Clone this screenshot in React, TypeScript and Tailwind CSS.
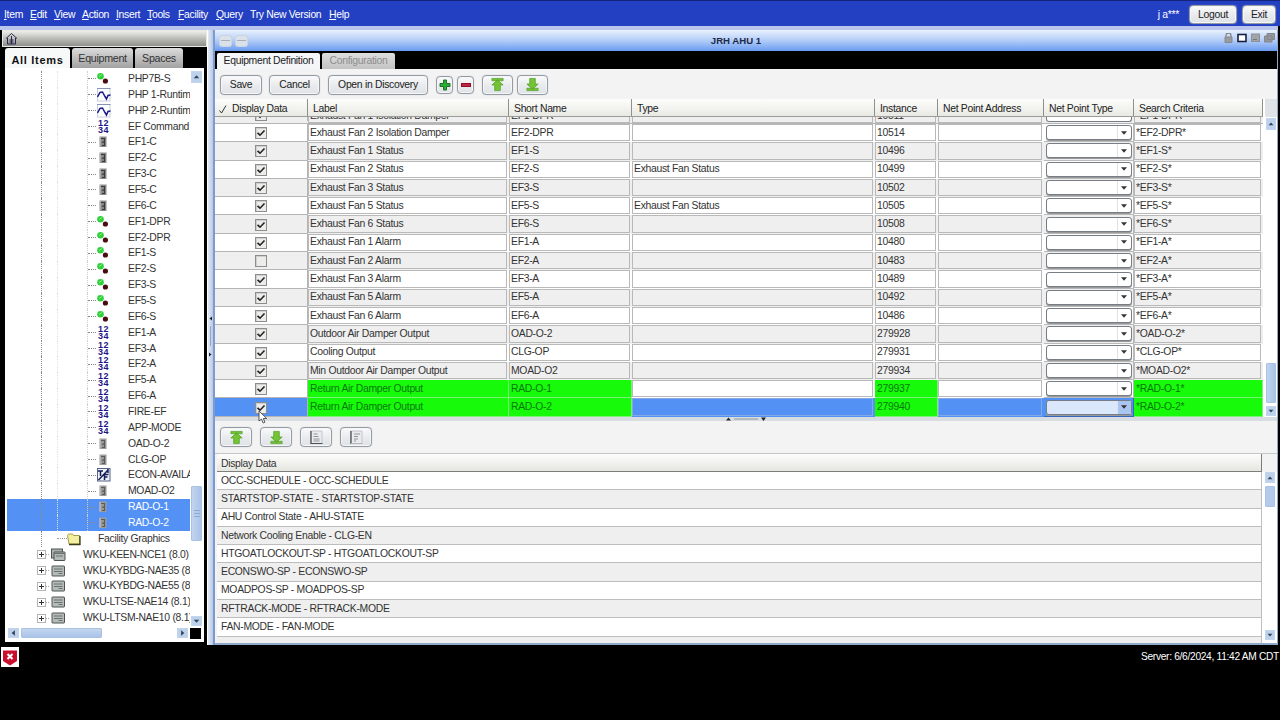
import type { ReactNode } from "react";

type IconKind = "bool" | "trend" | "number" | "analog" | "output" | "logic";

type TreeItem = { name: string; icon: IconKind; selected?: boolean };

type EquipmentRow = {
    label: string;
    short: string;
    type?: string;
    instance: string;
    unchecked?: boolean;
    added?: boolean;
    selected?: boolean;
};

const MENU = ["Item", "Edit", "View", "Action", "Insert", "Tools", "Facility", "Query", "Try New Version", "Help"];
const MENU_WIDTHS = [
    "w-[26px]", "w-[24px]", "w-[28px]", "w-[34px]", "w-[31px]",
    "w-[31px]", "w-[38px]", "w-[34px]", "w-[79px]", "w-[24px]",
];

const POINTS: TreeItem[] = [
    { name: "PHP7B-S", icon: "bool" },
    { name: "PHP 1-Runtim", icon: "trend" },
    { name: "PHP 2-Runtim", icon: "trend" },
    { name: "EF Command", icon: "number" },
    { name: "EF1-C", icon: "analog" },
    { name: "EF2-C", icon: "analog" },
    { name: "EF3-C", icon: "analog" },
    { name: "EF5-C", icon: "analog" },
    { name: "EF6-C", icon: "analog" },
    { name: "EF1-DPR", icon: "bool" },
    { name: "EF2-DPR", icon: "bool" },
    { name: "EF1-S", icon: "bool" },
    { name: "EF2-S", icon: "bool" },
    { name: "EF3-S", icon: "bool" },
    { name: "EF5-S", icon: "bool" },
    { name: "EF6-S", icon: "bool" },
    { name: "EF1-A", icon: "number" },
    { name: "EF3-A", icon: "number" },
    { name: "EF2-A", icon: "number" },
    { name: "EF5-A", icon: "number" },
    { name: "EF6-A", icon: "number" },
    { name: "FIRE-EF", icon: "number" },
    { name: "APP-MODE", icon: "number" },
    { name: "OAD-O-2", icon: "output" },
    { name: "CLG-OP", icon: "output" },
    { name: "ECON-AVAILA", icon: "logic" },
    { name: "MOAD-O2", icon: "output" },
    { name: "RAD-O-1", icon: "output", selected: true },
    { name: "RAD-O-2", icon: "output", selected: true },
];

const ENGINES = [
    "WKU-KEEN-NCE1 (8.0)",
    "WKU-KYBDG-NAE35 (8.",
    "WKU-KYBDG-NAE55 (8.",
    "WKU-LTSE-NAE14 (8.1)",
    "WKU-LTSM-NAE10 (8.1)",
];

const ROWS: EquipmentRow[] = [
    { label: "Exhaust Fan 2 Isolation Damper", short: "EF2-DPR", instance: "10514" },
    { label: "Exhaust Fan 1 Status", short: "EF1-S", instance: "10496" },
    { label: "Exhaust Fan 2 Status", short: "EF2-S", type: "Exhaust Fan Status", instance: "10499" },
    { label: "Exhaust Fan 3 Status", short: "EF3-S", instance: "10502" },
    { label: "Exhaust Fan 5 Status", short: "EF5-S", type: "Exhaust Fan Status", instance: "10505" },
    { label: "Exhaust Fan 6 Status", short: "EF6-S", instance: "10508" },
    { label: "Exhaust Fan 1 Alarm", short: "EF1-A", instance: "10480" },
    { label: "Exhaust Fan 2 Alarm", short: "EF2-A", instance: "10483", unchecked: true },
    { label: "Exhaust Fan 3 Alarm", short: "EF3-A", instance: "10489" },
    { label: "Exhaust Fan 5 Alarm", short: "EF5-A", instance: "10492" },
    { label: "Exhaust Fan 6 Alarm", short: "EF6-A", instance: "10486" },
    { label: "Outdoor Air Damper Output", short: "OAD-O-2", instance: "279928" },
    { label: "Cooling Output", short: "CLG-OP", instance: "279931" },
    { label: "Min Outdoor Air Damper Output", short: "MOAD-O2", instance: "279934" },
    { label: "Return Air Damper Output", short: "RAD-O-1", instance: "279937", added: true },
    { label: "Return Air Damper Output", short: "RAD-O-2", instance: "279940", added: true, selected: true },
];

const DISPLAY_DATA = [
    "OCC-SCHEDULE - OCC-SCHEDULE",
    "STARTSTOP-STATE - STARTSTOP-STATE",
    "AHU Control State - AHU-STATE",
    "Network Cooling Enable - CLG-EN",
    "HTGOATLOCKOUT-SP - HTGOATLOCKOUT-SP",
    "ECONSWO-SP - ECONSWO-SP",
    "MOADPOS-SP - MOADPOS-SP",
    "RFTRACK-MODE - RFTRACK-MODE",
    "FAN-MODE - FAN-MODE",
];

const GRID = "grid grid-cols-[93px_201px_123px_243px_63px_106px_90px_129px]";

function PointIcon({ kind }: { kind: IconKind }) {
    if (kind === "bool") {
        return (
            <svg width="14" height="14" viewBox="0 0 14 14">
                <circle cx="3.5" cy="4.2" r="3.3" fill="#2fd03a" />
                <path d="M2 4.5l3-2" stroke="#8df08f" strokeWidth="1" />
                <circle cx="8.4" cy="9" r="2.6" fill="#4a0c10" />
            </svg>
        );
    }
    if (kind === "trend") {
        return (
            <svg width="14" height="14" viewBox="0 0 14 14" fill="none">
                <rect x="0.5" y="0.5" width="12.5" height="12.5" fill="#fff" stroke="#c9cede" />
                <path d="M0 .5h13.5" stroke="#8a93b5" />
                <path d="M0.5 9L3 4.5L5.500 4L8 8.5L9.500 11L11 7.5L13.500 7" stroke="#1b1b8c" strokeWidth="1.5" />
            </svg>
        );
    }
    if (kind === "number") {
        return (
            <div className="w-[14px] pl-px text-[9px] leading-[7px] font-bold tracking-[0.6px] text-[#1c1685]">
                <div>12</div>
                <div>34</div>
            </div>
        );
    }
    if (kind === "logic") {
        return (
            <svg width="14" height="14" viewBox="0 0 14 14" fill="none">
                <rect x="0.5" y="0.5" width="12.5" height="12.5" fill="#f0f2f8" stroke="#56618a" />
                <path d="M1 3h5M3.5 3v5M1.5 12L11 2M7.5 12V6.5h4M7.5 9h3M11 1v4" stroke="#151f58" strokeWidth="1.5" />
            </svg>
        );
    }
    return (
        <svg width="14" height="14" viewBox="0 0 14 14" fill="none">
            <rect x="2.5" y="1.5" width="7" height="10.5" fill={kind === "analog" ? "#8b8b8b" : "#9b9b9b"} />
            <path d="M4 3.500h3.5v3L5 7.500M7.5 7v3.500H5" stroke={kind === "analog" ? "#3a3a3a" : "#5b5b5b"} strokeWidth="1.2" />
            <path d="M3 2v9.5" stroke="#c9c9c9" />
        </svg>
    );
}

function EngineIcon({ stacked }: { stacked: boolean }) {
    return (
        <svg width="15" height="14" viewBox="0 0 15 14" fill="none">
            {stacked && <rect x="0.5" y="1" width="11" height="9" fill="#a9b0ae" stroke="#4c5452" />}
            <rect x={stacked ? 3 : 1} y={stacked ? 4 : 2} width={stacked ? 11 : 12.5} height={stacked ? 8.5 : 10} rx="0.5" fill="#b4bab8" stroke="#4c5452" />
            <path d={stacked ? "M3 5.5h11M5 8h7" : "M3 5h8.5M3 7.5h8.5M7.5 9.5h4"} stroke="#6b7371" />
        </svg>
    );
}

// Vertical guide lines drawn at the left of every tree row
function Guides() {
    return (
        <div className="flex h-full shrink-0">
            <div className="w-[34px]" />
            <div className="w-4 border-l border-dotted border-[#8a8a8a]" />
            <div className="w-[30px] border-l border-dotted border-[#e2e2e2]" />
            <div className="flex w-[10px] items-center border-l border-dotted border-[#d0d0d0]">
                <div className="w-2 border-t border-dotted border-[#888]" />
            </div>
        </div>
    );
}

function ScrollButton({ dir, className = "" }: { dir: "up" | "down" | "left" | "right"; className?: string }) {
    const paths = { up: "M2 6.5L5 3l3 3.5z", down: "M2 3.5L5 7l3-3.5z", left: "M6.5 2L3 5l3.5 3z", right: "M3.5 2L7 5 3.5 8z" };
    return (
        <div className={`flex shrink-0 items-center justify-center border border-[#c3d5ec] bg-[#bdd1ea] ${className}`}>
            <svg width="10" height="10" viewBox="0 0 10 10">
                <path d={paths[dir]} fill="#33415c" />
            </svg>
        </div>
    );
}

function Check({ off = false }: { off?: boolean }) {
    return (
        <span className="flex h-3 w-3 shrink-0 items-center justify-center border border-[#8d8d8d] bg-[#ececea] shadow-[inset_1px_1px_0_#cfcfcf]">
            {!off && (
                <svg width="10" height="10" viewBox="0 0 10 10" fill="none">
                    <path d="M1.5 4.8L4 7.2L8.500 2.5" stroke="#222" strokeWidth="1.6" />
                </svg>
            )}
        </span>
    );
}

function ToolButton({ children, className = "" }: { children: ReactNode; className?: string }) {
    return (
        <button
            type="button"
            className={`flex shrink-0 items-center justify-center rounded-[4px] border border-[#949ba3] bg-linear-to-b from-[#fafbfc] via-[#e9ebee] to-[#dfe3e7] whitespace-nowrap text-[#222] shadow-[inset_0_0_0_1px_#f4f6f8,0_0_1px_#a9b0b8] ${className}`}
        >
            {children}
        </button>
    );
}

function MoveIcon({ down = false }: { down?: boolean }) {
    return (
        <svg width="15" height="15" viewBox="0 0 16 16" className={down ? "rotate-180" : ""}>
            <path d="M2 1.5h12v2.5H2zM8 3L14 8.500H11V14.500H5V8.500H2z" fill="#72c435" stroke="#57a02c" strokeWidth="0.8" />
        </svg>
    );
}

function ListIcon({ left = false }: { left?: boolean }) {
    return (
        <svg width="15" height="15" viewBox="0 0 15 15" fill="none">
            <path d="M1.5 1h11.5v12.5H1.5z" fill="#e9ebee" stroke="#c3c6cc" />
            <path d="M2 1v13" stroke="#4d5055" strokeWidth="1.3" />
            <path d="M2 13.500h11.5" stroke={left ? "#b4b7bc" : "#4d5055"} />
            <path d={left ? "M5 4h6M5 6.500h4M5 9h4M5 11h2" : "M4.500 4h4M4.500 6.500h5M4.500 9h6M4.500 11h6"} stroke="#8f9298" />
        </svg>
    );
}

function LeftPane() {
    return (
        <div className="flex h-[615px] w-[207px] shrink-0 flex-col bg-black pl-[2px]">
            <div className="flex h-[17px] shrink-0 items-center border border-[#e8e8e4] bg-linear-to-b from-[#eeeeea] via-[#bdbdb8] to-[#8f8f8b] pl-[2px]">
                <svg width="13" height="13" viewBox="0 0 13 13" fill="none" stroke="#26264e">
                    <path d="M1 6.500L6.500 1.500L12 6.500M2.500 6v6h8V6M4.500 8h4M4.500 10h4M6.500 4v8" />
                </svg>
            </div>
            <div className="flex h-[21px] shrink-0 items-end gap-[2px] pl-[3px]">
                <div className="flex h-5 w-[65px] items-center justify-center rounded-t-[3px] bg-[#f7f8f8] pt-[3px] text-[11px] font-bold tracking-[0.7px] whitespace-nowrap text-[#111]">All Items</div>
                <div className="flex h-5 w-[61px] items-center justify-center rounded-t-[3px] bg-linear-to-b from-[#dcdcdc] to-[#a2a2a2] text-[10.7px] text-[#333]">Equipment</div>
                <div className="flex h-5 w-[48px] items-center justify-center rounded-t-[3px] bg-linear-to-b from-[#dcdcdc] to-[#a2a2a2] text-[10.7px] text-[#333]">Spaces</div>
            </div>
            <div className="flex h-[576px] flex-col border-l-[3px] border-r-[3px] border-b-2 border-black bg-white">
                <div className="flex h-[559px] pl-[2px]">
                    <div className="w-[183px] shrink-0 overflow-hidden pt-[3px]">
                        {POINTS.map((p) => (
                            <div
                                key={p.name}
                                className={`flex h-[15.86px] items-center whitespace-nowrap ${p.selected ? "bg-[#5491f5] text-white" : ""}`}
                            >
                                <Guides />
                                <div className="flex w-[31px] shrink-0 items-center">
                                    <PointIcon kind={p.icon} />
                                </div>
                                <span>{p.name}</span>
                            </div>
                        ))}
                        <div className="flex h-[15.86px] items-center whitespace-nowrap">
                            <div className="h-full w-[34px]" />
                            <div className="h-full w-4 border-l border-dotted border-[#8a8a8a]" />
                            <div className="w-[10px] border-t border-dotted border-[#999]" />
                            <svg width="31" height="14" viewBox="0 0 31 14">
                                <path d="M0.500 3.500l1-1.500h4l1 1.500h6v8.500H2z" fill="#f3f0a2" stroke="#a3a04a" />
                                <path d="M13 4v8.500H2" fill="none" stroke="#3c3b1e" strokeWidth="1.3" />
                            </svg>
                            <span>Facility Graphics</span>
                        </div>
                        {ENGINES.map((name, i) => (
                            <div key={name} className="flex h-[15.86px] items-center whitespace-nowrap">
                                <div className="flex w-[44px] shrink-0 items-center pl-[30px]">
                                    <svg width="13" height="9" viewBox="0 0 13 9" fill="none">
                                        <rect x="0.5" y="0.5" width="8" height="8" fill="#fff" stroke="#b5b5b5" />
                                        <path d="M2 4.500h5M4.500 2v5" stroke="#333" />
                                        <path d="M9 4.500h4" stroke="#aaa" strokeDasharray="1 1" />
                                    </svg>
                                </div>
                                <div className="w-[32px] shrink-0">
                                    <EngineIcon stacked={i === 0} />
                                </div>
                                <span>{name}</span>
                            </div>
                        ))}
                    </div>
                    <div className="flex w-[13px] flex-col items-center bg-white pt-[3px]">
                        <ScrollButton dir="up" className="h-3 w-[11px]" />
                        <div className="mt-[403px] flex h-[55px] w-[11px] flex-col items-center justify-center gap-[2px] rounded-[1px] border border-[#a9c2e2] bg-linear-to-r from-[#c2d4ee] to-[#a9c3e8]">
                            <div className="h-px w-[6px] bg-[#8faad2]" />
                            <div className="h-px w-[6px] bg-[#8faad2]" />
                            <div className="h-px w-[6px] bg-[#8faad2]" />
                        </div>
                        <ScrollButton dir="down" className="mt-auto mb-px h-[10px] w-[11px]" />
                    </div>
                </div>
                <div className="flex h-3 items-center pl-[3px]">
                    <ScrollButton dir="left" className="h-[10px] w-[11px]" />
                    <div className="ml-[2px] h-[10px] w-[81px] rounded-[1px] border border-[#a9c2e2] bg-linear-to-b from-[#c4d6f0] to-[#a9c3e8]" />
                    <ScrollButton dir="right" className="ml-[75px] h-[10px] w-[11px]" />
                    <div className="ml-[2px] h-[11px] w-[11px] bg-black" />
                </div>
            </div>
        </div>
    );
}

function EquipmentTable() {
    const headers = ["Label", "Short Name", "Type", "Instance", "Net Point Address", "Net Point Type", "Search Criteria"];
    const sliver = "mr-[2px] flex h-[6px] items-end overflow-hidden border-x border-b border-[#b9b9b9] pb-px pl-px leading-[11px] whitespace-nowrap";
    return (
        <div className="flex h-[318px] shrink-0">
            <div className="w-[1048px] shrink-0 overflow-hidden">
                <div className={`${GRID} h-[18px] border-b border-[#9c9c98] bg-linear-to-b from-[#fdfdfb] to-[#e9e9e4] text-[#222]`}>
                    <div className="flex items-center gap-[5px] border-r border-[#8f8f8c] pt-[3px] pl-1 whitespace-nowrap">
                        <svg width="8" height="9" viewBox="0 0 8 9" fill="none">
                            <path d="M0.5 5.500L2.500 8L7 0.500" stroke="#333" />
                        </svg>
                        Display Data
                    </div>
                    {headers.map((h) => (
                        <div key={h} className="flex items-center border-r border-[#8f8f8c] pt-[3px] pl-[5px] whitespace-nowrap">
                            {h}
                        </div>
                    ))}
                </div>
                {/* Bottom edge of the row scrolled under the header */}
                <div className={`${GRID} h-[7px] border-b border-[#b5b5b5] bg-[#efefef]`}>
                    <div className="flex h-[4px] items-end justify-center overflow-hidden border-r border-[#b5b5b5]"><Check /></div>
                    <div className={sliver}>Exhaust Fan 1 Isolation Damper</div>
                    <div className={sliver}>EF1-DPR</div>
                    <div className={sliver} />
                    <div className={sliver}>10511</div>
                    <div className={sliver} />
                    <div className="mx-[2px] h-[5px] rounded-b-[3px] border border-t-0 border-[#777d86] bg-white" />
                    <div className={sliver}>*EF1-DPR*</div>
                </div>
                {ROWS.map((r, i) => {
                    const bg = r.selected ? "bg-[#5491f5]" : i % 2 ? "bg-[#efefef]" : "bg-white";
                    const plain = `mr-[2px] mb-px flex items-center border pl-px whitespace-nowrap ${r.selected ? "border-[#86a9e6]" : "border-[#b9b9b9]"}`;
                    const cell = r.added
                        ? "flex items-center border-r border-b border-[#7df07a] bg-[#17fb0b] pl-[2px] whitespace-nowrap text-[#087a0c]"
                        : plain;
                    return (
                        <div key={r.short} className={`${GRID} h-[18.31px] ${bg}`}>
                            <div className="flex items-center justify-center border-r border-b border-[#b5b5b5] pt-px">
                                <Check off={r.unchecked} />
                            </div>
                            <div className={cell}>{r.label}</div>
                            <div className={cell}>{r.short}</div>
                            <div className={plain}>{r.type}</div>
                            <div className={cell}>{r.instance}</div>
                            <div className={plain} />
                            <div className={`flex items-center justify-center border-r border-b ${r.selected ? "border-[#3a66c0]" : "border-[#b9b9b9]"}`}>
                                <div className={`flex h-[15px] w-[86px] justify-end rounded-[3px] border border-[#777d86] shadow-[0_1px_0_#999] ${r.selected ? "bg-[#dbe8fb]" : "bg-white"}`}>
                                    <div className={`flex w-[14px] items-center justify-center border-l border-[#dde3ea] ${r.selected ? "bg-[#a9c6f2]" : ""}`}>
                                        <svg width="6" height="4" viewBox="0 0 7 4">
                                            <path d="M0 0h7L3.500 4z" fill="#333" />
                                        </svg>
                                    </div>
                                </div>
                            </div>
                            <div className={cell}>*{r.short}*</div>
                        </div>
                    );
                })}
            </div>
            <div className="flex flex-1 flex-col items-center bg-white pl-[2px]">
                <div className="h-[18px] w-full bg-[#dfe3e8]" />
                <ScrollButton dir="up" className="mt-px h-3 w-[10px]" />
                <div className="mt-auto h-[40px] w-[10px] rounded-[1px] border border-[#a9c2e2] bg-linear-to-r from-[#c2d4ee] to-[#a9c3e8]" />
                <ScrollButton dir="down" className="mt-[3px] mb-px h-[10px] w-[10px]" />
            </div>
        </div>
    );
}

function RightPane() {
    return (
        <div className="flex h-[615px] w-[1063px] flex-col border-r border-b-2 border-[#8fa9cd] bg-[#f3f3f3]">
            <div className="flex h-[21px] shrink-0 items-center bg-linear-to-b from-[#e9f1fd] via-[#b3cdf8] to-[#699af0]">
                <div className="flex w-[54px] gap-[3px] pl-1">
                    {["back", "forward"].map((a) => (
                        <div key={a} className="flex h-3 w-[13px] items-center justify-center rounded-[3px] border border-[#c9d3e2] bg-[#dbe1e9]">
                            <div className="h-px w-[9px] bg-[#aab0b8]" />
                        </div>
                    ))}
                </div>
                <div className="flex-1 pr-[20px] text-center text-[9.6px] font-bold tracking-normal text-[#1c2a4a]">JRH AHU 1</div>
                <svg width="54" height="16" viewBox="0 1 54 16" fill="none">
                    <path d="M3 5V3.500a2.500 2.500 0 015 0V5" stroke="#85888b" strokeWidth="1.300" />
                    <path d="M2 5h7v5.500H2z" fill="#999b9e" stroke="#85888b" />
                    <rect x="15" y="2.500" width="8" height="7" fill="#fff" stroke="#17203f" strokeWidth="1.600" />
                    <rect x="28.500" y="2" width="8" height="7.500" fill="#a1a4a8" stroke="#8d9095" />
                    <path d="M30 7.500h4" stroke="#777" />
                    <path d="M44 1.500h7.500v6H44zM41.500 4h7.500v6h-7.500z" fill="#94979c" stroke="#83868b" />
                </svg>
            </div>
            <div className="flex h-[18px] shrink-0 items-end gap-[2px] bg-black pl-[2px]">
                <div className="flex h-4 w-[103px] items-center justify-center rounded-t-[2px] bg-[#f5f6f7] whitespace-nowrap text-[#222]">Equipment Definition</div>
                <div className="flex h-4 w-[73px] items-center justify-center rounded-t-[2px] bg-linear-to-b from-[#dedede] to-[#c3c3c3] text-[#8d8d8d]">Configuration</div>
            </div>
            <div className="flex h-[30px] shrink-0 items-center pt-px pl-[5px]">
                <ToolButton className="h-5 w-[42px]">Save</ToolButton>
                <ToolButton className="ml-[7px] h-5 w-[51px]">Cancel</ToolButton>
                <ToolButton className="ml-[8px] h-5 w-[100px]">Open in Discovery</ToolButton>
                <ToolButton className="ml-[8px] h-[18px] w-[17px]">
                    <svg width="12" height="12" viewBox="0 0 12 12">
                        <path d="M4.500 1h3v3.500H11v3H7.500V11h-3V7.500H1v-3h3.500z" fill="#28ad35" stroke="#15671d" strokeWidth="0.900" />
                    </svg>
                </ToolButton>
                <ToolButton className="ml-[4px] h-[18px] w-[17px]">
                    <span className="h-[4px] w-[10px] border border-[#8e1029] bg-[#c22444]" />
                </ToolButton>
                <ToolButton className="ml-[8px] h-5 w-[31px]"><MoveIcon /></ToolButton>
                <ToolButton className="ml-[4px] h-5 w-[31px]"><MoveIcon down /></ToolButton>
            </div>
            <EquipmentTable />
            <div className="flex h-[4px] shrink-0 items-center justify-center bg-[#d8dde2]">
                <svg width="40" height="4" viewBox="0 0 40 4">
                    <path d="M0 3.500h5L2.500 0.500zM35 0.500h5L37.500 4z" fill="#222" />
                    <path d="M8 2h24" stroke="#8f949b" />
                </svg>
            </div>
            <div className="flex h-[32px] shrink-0 items-center gap-[8px] pl-[5px]">
                <ToolButton className="h-5 w-[32px]"><MoveIcon /></ToolButton>
                <ToolButton className="h-5 w-[32px]"><MoveIcon down /></ToolButton>
                <ToolButton className="h-5 w-[32px]"><ListIcon /></ToolButton>
                <ToolButton className="h-5 w-[32px]"><ListIcon left /></ToolButton>
            </div>
            <div className="flex min-h-0 flex-1 border-t border-[#c3c7cc]">
                <div className="ml-[2px] w-[1045px] shrink-0 overflow-hidden">
                    <div className="flex h-[18px] items-center border-r border-b border-[#7d7d7a] bg-linear-to-b from-[#fdfdfb] to-[#e6e6e1] pt-[3px] pl-1">Display Data</div>
                    {DISPLAY_DATA.map((name, i) => (
                        <div
                            key={name}
                            className={`flex h-[18.31px] items-center border-r border-b border-[#bdbdbd] pl-1 ${i % 2 ? "bg-[#efefef]" : "bg-white"}`}
                        >
                            {name}
                        </div>
                    ))}
                    <div className="h-3 border-r border-[#bdbdbd] bg-[#efefef]" />
                </div>
                <div className="flex flex-1 flex-col items-center bg-white">
                    <div className="h-[18px] w-full bg-[#f3f3f3]" />
                    <ScrollButton dir="up" className="h-[11px] w-[10px]" />
                    <div className="mt-[3px] h-[21px] w-[10px] rounded-[1px] border border-[#a9c2e2] bg-[#b3caea]" />
                    <ScrollButton dir="down" className="mt-auto mb-[3px] h-[10px] w-[10px]" />
                </div>
            </div>
        </div>
    );
}

export default function App() {
    return (
        <div className="relative flex h-[720px] w-[1280px] flex-col overflow-hidden bg-black font-['Liberation_Sans',Arial,sans-serif] text-[10.4px] leading-[14px] tracking-[-0.3px] text-[#333]">
            <div className="flex h-[26px] shrink-0 items-center border-t border-[#14237c] bg-[#2340c2] pt-[2px] pl-1 text-white">
                {MENU.map((m, i) => (
                    <span key={m} className={`shrink-0 whitespace-nowrap ${MENU_WIDTHS[i]}`}>
                        {m === "Try New Version" ? m : <><u>{m[0]}</u>{m.slice(1)}</>}
                    </span>
                ))}
                <span className="mr-[10px] ml-auto">j a***</span>
                <ToolButton className="mr-[5px] h-[19px] w-[48px]">Logout</ToolButton>
                <ToolButton className="mr-[4px] h-[19px] w-[34px]">Exit</ToolButton>
            </div>
            <div className="h-1 w-[1278px] shrink-0 bg-[#b9c5ec]" />
            <div className="flex h-[615px] shrink-0">
                <LeftPane />
                <div className="flex w-[8px] shrink-0 flex-col items-center border-r-2 border-l border-r-[#7d9bd0] border-l-white bg-linear-to-r from-[#e3e9f3] to-[#b7c9e6] pt-[286px]">
                    <svg width="5" height="42" viewBox="0 0 5 42">
                        <path d="M4 0.500v4L1.500 2.500zM1 36.500v4L3.500 38.500z" fill="#222" />
                        <path d="M2.500 10v20" stroke="#8fa6c9" />
                    </svg>
                </div>
                <RightPane />
            </div>
            <div className="flex flex-1 items-start justify-between text-white">
                <div className="mt-[2px] ml-px flex h-5 w-[18px] items-center justify-center bg-white">
                    <svg width="14" height="17" viewBox="0 0 14 17">
                        <path d="M0 1.500h14v10.500L7 16.500 0 12z" fill="#c8102e" />
                        <path d="M4.500 5l5 5M9.500 5l-5 5" stroke="#fff" strokeWidth="2" />
                    </svg>
                </div>
                <span className="mt-[5px] mr-px text-[10.2px] whitespace-nowrap">Server: 6/6/2024, 11:42 AM CDT</span>
            </div>
            {/* Mouse pointer */}
            <svg className="absolute top-[410px] left-[258px]" width="10" height="14" viewBox="0 0 10 14">
                <path d="M1 1v10l2.500-2 1.700 4 1.700-.8L5.300 8.500h3.400z" fill="#fff" stroke="#444" strokeWidth="0.900" />
            </svg>
        </div>
    );
}
